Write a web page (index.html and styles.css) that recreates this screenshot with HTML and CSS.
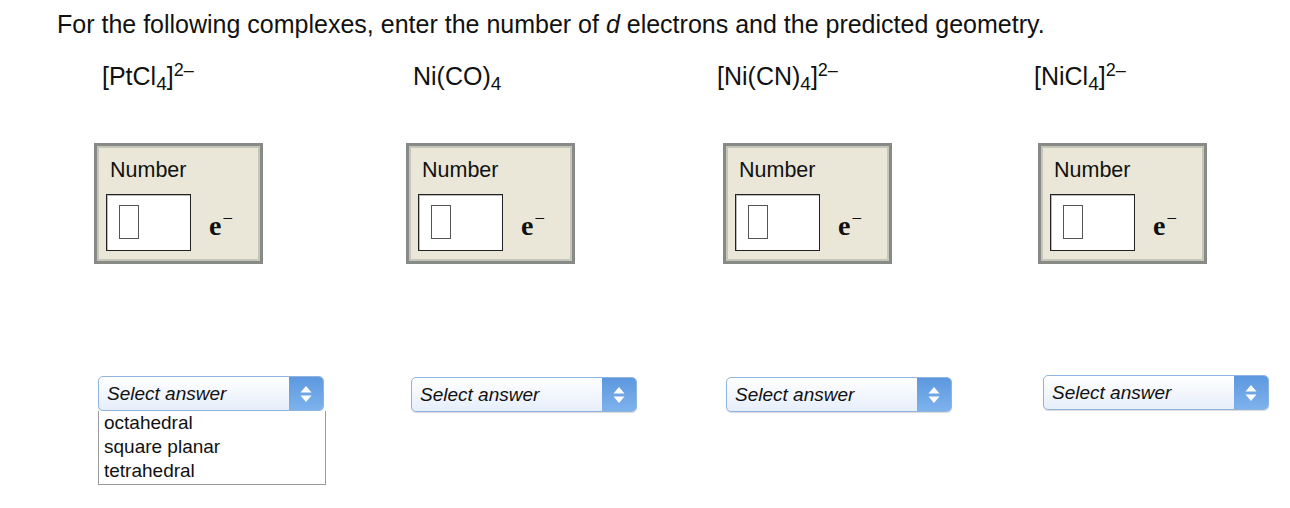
FILE: index.html
```html
<!DOCTYPE html>
<html>
<head>
<meta charset="utf-8">
<link rel="stylesheet" href="styles.css">
</head>
<body>
<div class="page">
  <p class="prompt">For the following complexes, enter the number of <i>d</i> electrons and the predicted geometry.</p>
  <div class="cols">
    <div class="col c1">
      <div class="formula">[PtCl<sub>4</sub>]<sup>2–</sup></div>
      <div class="box">
        <div class="label">Number</div>
        <div class="row">
          <div class="input"><span class="cursor"></span></div>
          <span class="unit">e<sup>–</sup></span>
        </div>
      </div>
      <div class="selectwrap">
        <div class="select"><span class="seltext">Select answer</span><span class="btn"><svg width="12" height="22" viewBox="0 0 12 22"><path d="M6 3 L11.5 9.5 L0.5 9.5 Z" fill="#fff"/><path d="M6 19 L11.5 12.5 L0.5 12.5 Z" fill="#fff"/></svg></span></div>
        <ul class="options">
          <li>octahedral</li>
          <li>square planar</li>
          <li>tetrahedral</li>
        </ul>
      </div>
    </div>
    <div class="col c2">
      <div class="formula">Ni(CO)<sub>4</sub></div>
      <div class="box">
        <div class="label">Number</div>
        <div class="row">
          <div class="input"><span class="cursor"></span></div>
          <span class="unit">e<sup>–</sup></span>
        </div>
      </div>
      <div class="selectwrap">
        <div class="select"><span class="seltext">Select answer</span><span class="btn"><svg width="12" height="22" viewBox="0 0 12 22"><path d="M6 3 L11.5 9.5 L0.5 9.5 Z" fill="#fff"/><path d="M6 19 L11.5 12.5 L0.5 12.5 Z" fill="#fff"/></svg></span></div>
      </div>
    </div>
    <div class="col c3">
      <div class="formula">[Ni(CN)<sub>4</sub>]<sup>2–</sup></div>
      <div class="box">
        <div class="label">Number</div>
        <div class="row">
          <div class="input"><span class="cursor"></span></div>
          <span class="unit">e<sup>–</sup></span>
        </div>
      </div>
      <div class="selectwrap">
        <div class="select"><span class="seltext">Select answer</span><span class="btn"><svg width="12" height="22" viewBox="0 0 12 22"><path d="M6 3 L11.5 9.5 L0.5 9.5 Z" fill="#fff"/><path d="M6 19 L11.5 12.5 L0.5 12.5 Z" fill="#fff"/></svg></span></div>
      </div>
    </div>
    <div class="col c4">
      <div class="formula">[NiCl<sub>4</sub>]<sup>2–</sup></div>
      <div class="box">
        <div class="label">Number</div>
        <div class="row">
          <div class="input"><span class="cursor"></span></div>
          <span class="unit">e<sup>–</sup></span>
        </div>
      </div>
      <div class="selectwrap">
        <div class="select"><span class="seltext">Select answer</span><span class="btn"><svg width="12" height="22" viewBox="0 0 12 22"><path d="M6 3 L11.5 9.5 L0.5 9.5 Z" fill="#fff"/><path d="M6 19 L11.5 12.5 L0.5 12.5 Z" fill="#fff"/></svg></span></div>
      </div>
    </div>
  </div>
</div>
</body>
</html>
```
FILE: styles.css
```css
html, body {
  margin: 0;
  padding: 0;
  background: #fff;
}
body {
  font-family: "Liberation Sans", Arial, sans-serif;
  color: #111;
  width: 1290px;
  height: 508px;
  overflow: hidden;
}
.page {
  padding: 9px 0 0 57px;
}
.prompt {
  margin: 0;
  font-size: 25px;
  line-height: 30px;
}
.cols {
  display: grid;
  grid-template-columns: 314px 315px 315px 315px;
  margin-left: 37px;
  margin-top: 21px;
}
.col {
  display: flex;
  flex-direction: column;
  align-items: flex-start;
}
.formula {
  font-size: 25px;
  line-height: 32px;
  height: 32px;
  white-space: nowrap;
}
.formula sub {
  font-size: 19px;
  vertical-align: -5px;
  line-height: 0;
}
.formula sup {
  font-size: 18px;
  vertical-align: 9px;
  line-height: 0;
}
.c1 .formula { margin-left: 8px; }
.c2 .formula { margin-left: 5px; }
.c3 .formula { margin-left: -6px; }
.c4 .formula { margin-left: -4px; }
.box {
  margin-top: 51px;
  width: 163px;
  height: 115px;
  box-sizing: content-box;
  border: 3px solid #878a86;
  box-shadow: inset 0 0 0 2px #c6c5b9;
  background: #ebe7d8;
  padding: 0;
}
.c2 .box { margin-left: -2px; }
.label {
  font-size: 21.5px;
  line-height: 24px;
  margin: 12px 0 0 13px;
}
.row {
  display: flex;
  align-items: center;
  margin: 12px 0 0 9px;
}
.input {
  width: 83px;
  height: 55px;
  border: 1px solid #222;
  background: #fff;
  box-shadow: inset 1px 1px 0 #bbb;
}
.cursor {
  display: block;
  width: 18px;
  height: 32px;
  border: 1px solid #555;
  margin: 10px 0 0 12px;
}
.unit {
  font-family: "Liberation Serif", "Times New Roman", serif;
  font-weight: bold;
  font-size: 28px;
  margin-left: 18px;
  margin-top: 6px;
}
.unit sup {
  font-size: 17px;
  font-weight: normal;
  vertical-align: 13px;
  line-height: 0;
  margin-left: 2px;
}
.selectwrap {
  margin-top: 112px;
  margin-left: 4px;
}
.c2 .selectwrap { margin-top: 113px; margin-left: 3px; }
.c3 .selectwrap { margin-top: 113px; margin-left: 3px; }
.c4 .selectwrap { margin-top: 111px; margin-left: 5px; }
.select {
  width: 226px;
  height: 35px;
  box-sizing: border-box;
  border: 1px solid #8fb4df;
  border-radius: 5px;
  background: linear-gradient(#ffffff, #e6eefa);
  display: flex;
  align-items: center;
  overflow: hidden;
  box-shadow: 0 1px 1px rgba(0,0,0,0.15);
}
.seltext {
  flex: 1;
  font-style: italic;
  font-size: 19px;
  padding-left: 8px;
  color: #111;
}
.btn {
  width: 34px;
  height: 100%;
  background: linear-gradient(#5d98df, #7db2ec);
  display: flex;
  align-items: center;
  justify-content: center;
}
.options {
  list-style: none;
  margin: 0;
  padding: 0 0 1px 0;
  width: 228px;
  box-sizing: border-box;
  border: 1px solid #9a9a9a;
  border-top: none;
  background: #fff;
}
.options li {
  font-size: 19px;
  line-height: 24px;
  padding-left: 5px;
}
```
